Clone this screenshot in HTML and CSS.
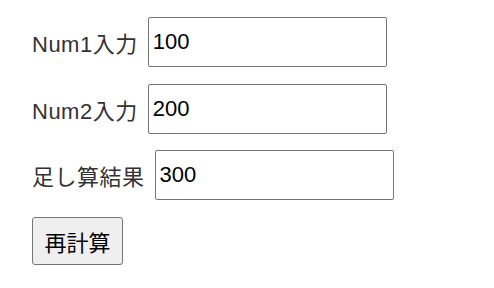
FILE: index.html
```html
<!DOCTYPE html>
<html lang="ja">
<head>
    <meta charset="UTF-8">
    <meta name="viewport" content="width=device-width, initial-scale=1.0">
    <title>足し算</title>
    <link rel="stylesheet" href="styles.css">
</head>
<body>

<form id="calc">
    <div class="row">
        <label for="num1">Num1入力</label>
        <input type="text" id="num1" value="100">
    </div>
    <div class="row">
        <label for="num2">Num2入力</label>
        <input type="text" id="num2" value="200">
    </div>
    <div class="row">
        <label for="result">足し算結果</label>
        <input type="text" id="result" value="300">
    </div>
    <div class="row">
        <button type="button">再計算</button>
    </div>
</form>

</body>
</html>
```

FILE: styles.css
```css
* {
    box-sizing: border-box;
    margin: 0;
    padding: 0;
}

body {
    font-family: "Liberation Sans", "Noto Sans CJK JP", sans-serif;
    background-color: #ffffff;
    padding: 17px 32px;
}

.row {
    display: flex;
    align-items: center;
    margin-bottom: 16.6px;
}

label {
    font-size: 22px;
    color: #333333;
    margin-right: 10px;
    letter-spacing: 0.5px;
}

input[type="text"] {
    width: 239px;
    height: 50px;
    padding: 0 4px;
    font-family: "Liberation Sans", sans-serif;
    font-size: 22px;
    color: #000000;
    border: 1px solid #767676;
    border-radius: 2px;
}

button {
    width: 91px;
    height: 48px;
    font-family: "Liberation Sans", "Noto Sans CJK JP", sans-serif;
    font-size: 22px;
    color: #000000;
    background-color: #efefef;
    border: 1px solid #767676;
    border-radius: 3px;
}
```
